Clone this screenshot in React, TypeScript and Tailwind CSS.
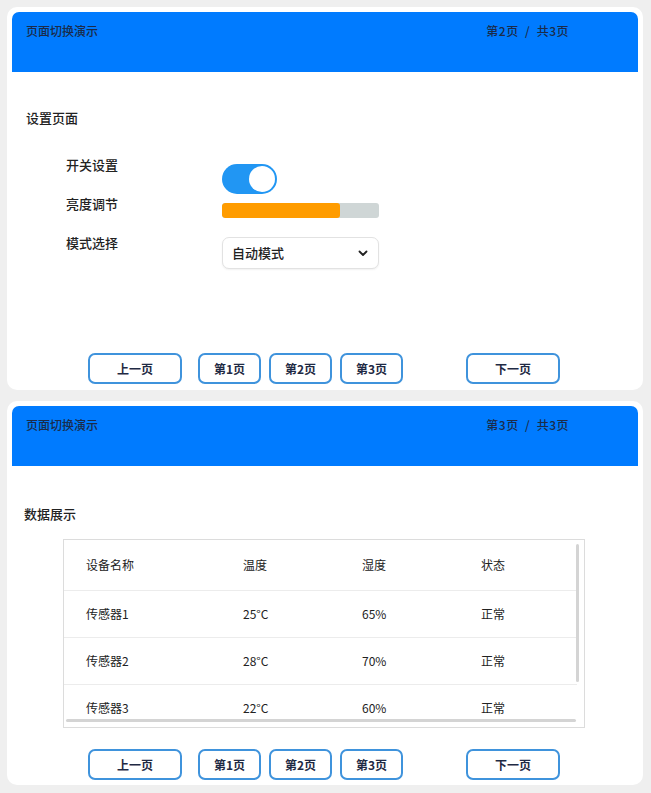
import React from "react";

const font = { fontFamily: '"Noto Sans CJK SC", "Noto Sans", sans-serif' };

function Header({ page }: { page: number }) {
  return (
    <div className="h-[60px] bg-[#007bff] rounded-t-[7px] flex items-start justify-between pl-[14px] pr-[69px] pt-[11px]">
      <span className="text-[12px] leading-[16px] font-medium text-[#1b2b49]">页面切换演示</span>
      <span className="text-[12px] leading-[16px] font-medium text-[#1b2b49] tracking-[0.5px]">
        第{page}页&nbsp;&nbsp;/&nbsp;&nbsp;共3页
      </span>
    </div>
  );
}

function Btn({ children, w, className = "" }: { children: React.ReactNode; w: string; className?: string }) {
  return (
    <button
      className={`${w} ${className} h-[31px] border-2 border-[#3f93dc] rounded-[7px] bg-white text-[12px] font-bold text-[#1f2a44] flex items-center justify-center`}
    >
      {children}
    </button>
  );
}

function Pager() {
  return (
    <div className="flex justify-center items-center pr-[2px]">
      <Btn w="w-[94px]">上一页</Btn>
      <Btn w="w-[63px]" className="ml-[16px]">第1页</Btn>
      <Btn w="w-[63px]" className="ml-[8px]">第2页</Btn>
      <Btn w="w-[63px]" className="ml-[8px]">第3页</Btn>
      <Btn w="w-[94px]" className="ml-[63px]">下一页</Btn>
    </div>
  );
}

function SettingsCard() {
  return (
    <div className="bg-white rounded-[10px] p-[5px] h-[383px] flex flex-col">
      <Header page={2} />
      <div className="h-[274px] pl-[14px] pt-[38px]">
        <div className="text-[13px] leading-[16px] font-medium text-[#222]">设置页面</div>
        <div className="pl-[40px] pt-[32px] flex flex-col">
          <div className="h-[39px] flex items-start">
            <span className="w-[156px] text-[13px] leading-[14px] font-medium text-[#222]">开关设置</span>
            <div className="mt-[6px] w-[55px] h-[30px] rounded-full bg-[#2196f3] flex items-center justify-end pr-[2px]">
              <div className="w-[26px] h-[26px] rounded-full bg-white" />
            </div>
          </div>
          <div className="h-[39px] flex items-start">
            <span className="w-[156px] text-[13px] leading-[14px] font-medium text-[#222]">亮度调节</span>
            <div className="mt-[6px] w-[157px] h-[15px] rounded-[3px] bg-[#cfd6d6] overflow-hidden">
              <div className="h-full bg-[#ff9c00] rounded-[3px]" style={{ width: "75%" }} />
            </div>
          </div>
          <div className="h-[39px] flex items-start">
            <span className="w-[156px] text-[13px] leading-[14px] font-medium text-[#222]">模式选择</span>
            <div className="mt-[1px] w-[157px] h-[32px] rounded-[7px] border border-[#e2e2e2] bg-white flex items-center justify-between pl-[9px] pr-[10px] shadow-[0_1px_2px_rgba(0,0,0,0.06)]">
              <span className="text-[13px] text-[#222] font-medium">自动模式</span>
              <svg width="10" height="7" viewBox="0 0 10 7">
                <path d="M1.5 1.5 L5 5 L8.5 1.5" fill="none" stroke="#222" strokeWidth="1.8" strokeLinecap="round" strokeLinejoin="round" />
              </svg>
            </div>
          </div>
        </div>
      </div>
      <div className="pt-[7px]">
        <Pager />
      </div>
    </div>
  );
}

const rows = [
  ["传感器1", "25°C", "65%", "正常"],
  ["传感器2", "28°C", "70%", "正常"],
  ["传感器3", "22°C", "60%", "正常"],
];

function Row({ cells, h, border }: { cells: string[]; h: string; border?: boolean }) {
  return (
    <div className={`${h} flex items-center pl-[22px] ${border ? "border-b border-[#ececec]" : ""}`}>
      <span className="w-[157px] text-[12px] text-[#222]">{cells[0]}</span>
      <span className="w-[119px] text-[12px] text-[#222]">{cells[1]}</span>
      <span className="w-[119px] text-[12px] text-[#222]">{cells[2]}</span>
      <span className="flex-1 text-[12px] text-[#222]">{cells[3]}</span>
    </div>
  );
}

function DataCard() {
  return (
    <div className="bg-white rounded-[10px] p-[5px] h-[384px] flex flex-col">
      <Header page={3} />
      <div className="h-[277px] pl-[12px] pt-[40px]">
        <div className="text-[13px] leading-[16px] font-medium text-[#222]">数据展示</div>
        <div className="ml-[39px] mt-[17px] w-[522px] h-[189px] border border-[#dcdcdc] relative overflow-hidden">
          <div className="w-[513px]">
            <Row cells={["设备名称", "温度", "湿度", "状态"]} h="h-[51px]" border />
            <Row cells={rows[0]} h="h-[47px]" border />
            <Row cells={rows[1]} h="h-[47px]" border />
            <Row cells={rows[2]} h="h-[47px]" />
          </div>
          <div className="absolute right-[5px] top-[4px] w-[3px] h-[138px] bg-[#d4d4d4] rounded-full" />
          <div className="absolute left-[2px] bottom-[5px] w-[510px] h-[3px] bg-[#d4d4d4] rounded-full" />
        </div>
      </div>
      <div className="pt-[7px]">
        <Pager />
      </div>
    </div>
  );
}

export default function App() {
  return (
    <div className="w-[651px] h-[793px] bg-[#efefef] pl-[7px] pr-[8px] pt-[7px] flex flex-col gap-[11px]" style={font}>
      <SettingsCard />
      <DataCard />
    </div>
  );
}
